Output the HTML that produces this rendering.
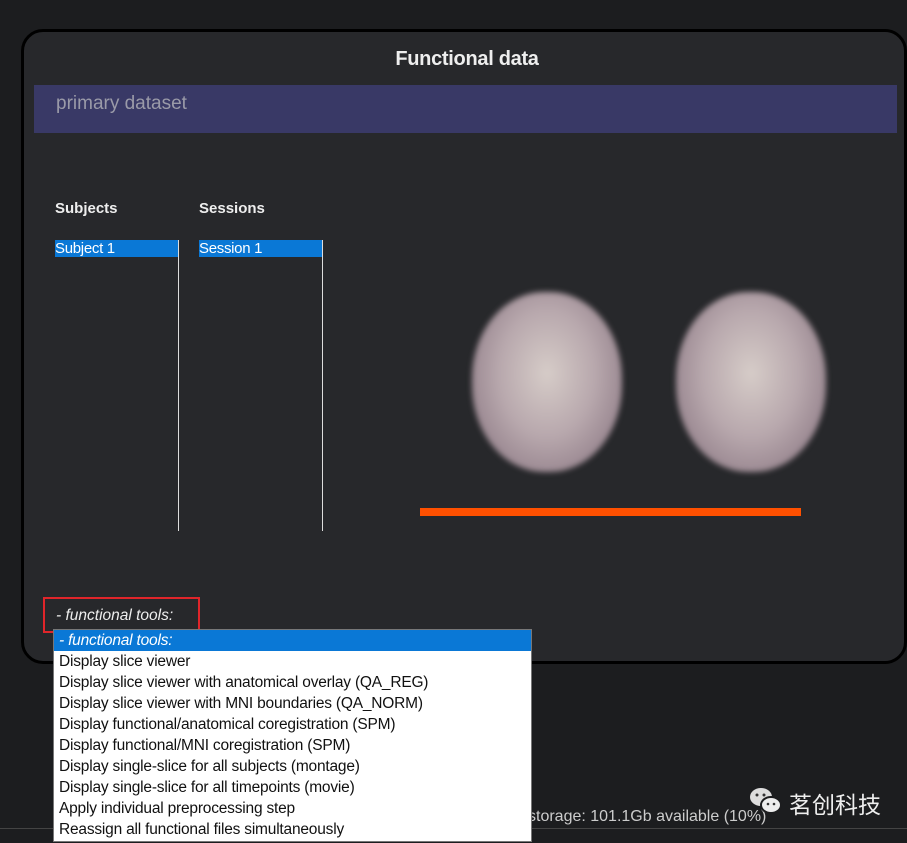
<!DOCTYPE html>
<html><head><meta charset="utf-8"><style>
body{margin:0;width:907px;height:843px;background:#1c1d1f;position:relative;overflow:hidden;font-family:"Liberation Sans",sans-serif}
.panel{position:absolute;left:21px;top:29px;width:880px;height:629px;background:#27282b;border:3px solid #000;border-radius:22px}
.t{position:absolute;color:#eee}
.bar{position:absolute;left:34px;top:85px;width:863px;height:48px;background:#393966}
.sel{position:absolute;background:#0a78d6;color:#fff;font-size:15px;line-height:17px;height:17px;letter-spacing:-0.3px}
.vl{position:absolute;width:1px;background:#ddd;top:240px;height:291px}
.brain{position:absolute;width:150px;height:180px;border-radius:48%;background:radial-gradient(ellipse at 50% 45%,#d6ccc8 0%,#b8a8ad 45%,#9c8a93 72%,rgba(60,50,55,0) 100%);filter:blur(3px)}
.dd{position:absolute;left:53px;top:629px;width:477px;height:211px;background:#fff;border:1px solid #777}
.dd div{font-size:15.5px;line-height:21px;height:21px;padding-left:5px;color:#111;white-space:nowrap;letter-spacing:-0.2px}
</style></head><body>
<div class="panel"></div>
<div class="t" style="left:0;width:934px;text-align:center;top:48px;font-size:20px;font-weight:bold;letter-spacing:-0.3px">Functional data</div>
<div class="bar"></div>
<div class="t" style="left:56px;top:93px;font-size:19px;color:#9a9aa8">primary dataset</div>
<div class="t" style="left:55px;top:200px;font-size:15px;font-weight:bold">Subjects</div>
<div class="t" style="left:199px;top:200px;font-size:15px;font-weight:bold">Sessions</div>
<div class="sel" style="left:55px;top:240px;width:123px">Subject 1</div>
<div class="sel" style="left:199px;top:240px;width:123px">Session 1</div>
<div class="vl" style="left:178px"></div><div class="vl" style="left:322px"></div>
<div class="brain" style="left:472px;top:292px"></div>
<div class="brain" style="left:676px;top:292px"></div>
<div style="position:absolute;left:420px;top:508px;width:381px;height:8px;background:#ff5000"></div>
<div style="position:absolute;left:43px;top:597px;width:153px;height:32px;border:2px solid #e0252a"></div>
<div class="t" style="left:56px;top:607px;font-size:15.5px;font-style:italic">- functional tools:</div>
<div class="t" style="left:528px;top:808px;font-size:16px;color:#ccc">storage: 101.1Gb available (10%)</div>
<div style="position:absolute;left:0;top:828px;width:907px;height:1px;background:#444"></div>
<div class="t" style="left:789px;top:786px;font-size:23px;color:#eee;font-family:'Liberation Sans','Noto Sans CJK SC',sans-serif">茗创科技</div>
<svg style="position:absolute;left:748px;top:785px" width="36" height="32"><ellipse cx="13" cy="12" rx="11" ry="9" fill="#ddd"/><ellipse cx="23" cy="20" rx="10" ry="8" fill="#eee" stroke="#1c1d1f" stroke-width="2"/><circle cx="9" cy="10" r="1.5" fill="#333"/><circle cx="16" cy="10" r="1.5" fill="#333"/><circle cx="20" cy="19" r="1.3" fill="#333"/><circle cx="26" cy="19" r="1.3" fill="#333"/></svg>
<div class="dd">
<div style="background:#0a78d6;color:#fff;font-style:italic">- functional tools:</div>
<div>Display slice viewer</div>
<div>Display slice viewer with anatomical overlay (QA_REG)</div>
<div>Display slice viewer with MNI boundaries (QA_NORM)</div>
<div>Display functional/anatomical coregistration (SPM)</div>
<div>Display functional/MNI coregistration (SPM)</div>
<div>Display single-slice for all subjects (montage)</div>
<div>Display single-slice for all timepoints (movie)</div>
<div>Apply individual preprocessing step</div>
<div>Reassign all functional files simultaneously</div>
</div>
</body></html>
